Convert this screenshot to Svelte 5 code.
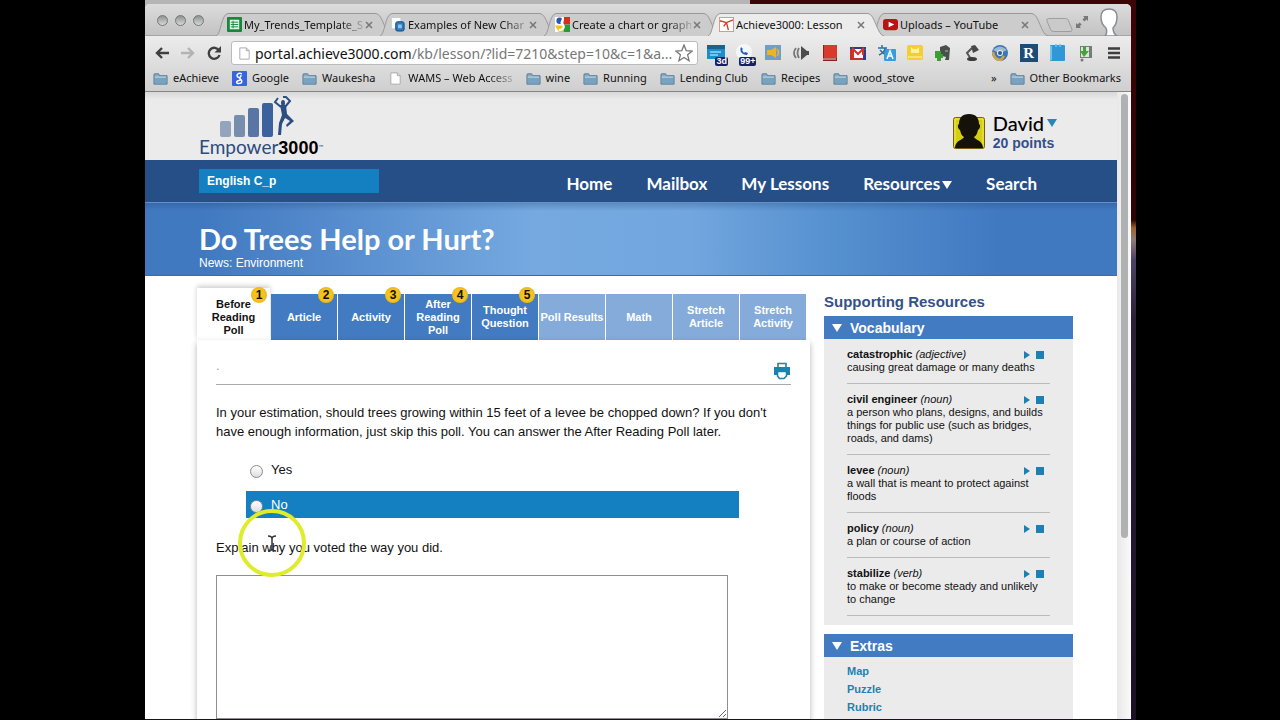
<script>

	let answer = '';
	let explanation = '';

	const tabs = [
		{ title: 'My_Trends_Template_S', icon: 'sheet', fade: true },
		{ title: 'Examples of New Char', icon: 'docs', fade: true },
		{ title: 'Create a chart or graph', icon: 'google', fade: true },
		{ title: 'Achieve3000: Lesson', icon: 'achieve', active: true },
		{ title: 'Uploads – YouTube', icon: 'youtube' }
	];

	const bookmarks = [
		{ label: 'eAchieve', icon: 'folder' },
		{ label: 'Google', icon: 'g' },
		{ label: 'Waukesha', icon: 'folder' },
		{ label: 'WAMS – Web Access', icon: 'page', fade: true },
		{ label: 'wine', icon: 'folder' },
		{ label: 'Running', icon: 'folder' },
		{ label: 'Lending Club', icon: 'folder' },
		{ label: 'Recipes', icon: 'folder' },
		{ label: 'wood_stove', icon: 'folder' }
	];

	const steps = [
		{ label: 'Before Reading Poll', num: 1, current: true },
		{ label: 'Article', num: 2 },
		{ label: 'Activity', num: 3 },
		{ label: 'After Reading Poll', num: 4 },
		{ label: 'Thought Question', num: 5 },
		{ label: 'Poll Results' },
		{ label: 'Math' },
		{ label: 'Stretch Article' },
		{ label: 'Stretch Activity' }
	];

	const words = [
		{ word: 'catastrophic', part: 'adjective', text: 'causing great damage or many deaths' },
		{ word: 'civil engineer', part: 'noun', text: 'a person who plans, designs, and builds things for public use (such as bridges, roads, and dams)' },
		{ word: 'levee', part: 'noun', text: 'a wall that is meant to protect against floods' },
		{ word: 'policy', part: 'noun', text: 'a plan or course of action' },
		{ word: 'stabilize', part: 'verb', text: 'to make or become steady and unlikely to change' }
	];

	const extras = ['Map', 'Puzzle', 'Rubric'];

</script>

{#snippet favicon(name)}
	<svg class="favicon" viewBox="0 0 16 16" aria-hidden="true">
		{#if name === 'sheet'}
			<rect width="16" height="16" rx="1" fill="#16883c" />
			<path d="M3 3h10v10H3z" fill="#e8f6ea" />
			<path d="M4 5.500h8M4 8h8M4 10.500h8M6.500 4v8" stroke="#16883c" fill="none" />
		{:else if name === 'docs'}
			<path d="M1 1h9v11H1z" fill="#fff" />
			<rect x="5" y="5" width="9" height="10" rx="2" fill="#2f79b8" stroke="#0d4e8b" />
			<path d="M7.500 8h4v4h-4z" fill="#8fc3ea" />
		{:else if name === 'google'}
			<rect width="16" height="16" fill="#fff" />
			<path d="M9 0h7v8H9z" fill="#d3301f" />
			<path d="M9 8h7v8H9z" fill="#259b3b" />
			<path d="M0 9h9v7H4z" fill="#f4c21c" />
			<circle cx="5" cy="4" r="3.500" fill="#2754b5" />
			<path d="M8 0c2 4-3 5 0 8s0 6-4 6" stroke="#fff" stroke-width="2.500" fill="none" />
		{:else if name === 'achieve'}
			<rect x=".5" y=".5" width="15" height="15" fill="#fff" stroke="#d99288" />
			<path d="M1 4l7 2 7-3M8 6l2 8M8 6l-3 4" stroke="#cc4030" stroke-width="1.500" fill="none" />
		{:else if name === 'youtube'}
			<rect y="2" width="16" height="12" rx="3" fill="#b91414" />
			<path d="M6 5l6 3-6 3z" fill="#fff" />
		{:else if name === 'folder'}
			<path d="M1 4q0-1 1-1h4l1 2h8v9H1z" fill="#88abc3" stroke="#557a94" />
			<path d="M2 7h12v6H2z" fill="#76a3c1" />
			<path d="M2 6.500h12" stroke="#c5dce9" />
		{:else if name === 'g'}
			<rect width="16" height="16" rx="1" fill="#3565df" />
			<path d="M10.500 3C7 1.500 4 4 6 6.200c2 1.600 4-.2 3.500-2M8 7c-.5 1.500 3 2 2.500 4.500C9.800 14 4.500 14 5 11.500 5.400 10 8 10 9 9.800" stroke="#fff" stroke-width="1.600" fill="none" />
		{:else}
			<path d="M3 2h7l3 3v9H3z" fill="#fff" stroke="#a9a9a9" />
			<path d="M10 2v3h3" fill="#ddd" stroke="#a9a9a9" />
		{/if}
	</svg>
{/snippet}

<div class="desktop">
	<div class="window">

		<div class="tab-strip">
			<div class="lights">
				<button aria-label="Close window"></button>
				<button aria-label="Minimize window"></button>
				<button aria-label="Zoom window"></button>
			</div>
			<div class="tabs">
				{#each tabs as tab}
					<div class="tab" class:active={tab.active}>
						<svg class="tab-shape" viewBox="0 0 176 23" preserveAspectRatio="none" aria-hidden="true">
							<path d="M0 23C5 22 5 1 12 .5H160C167 1 169 22 176 23" />
						</svg>
						{@render favicon(tab.icon)}
						<span class="tab-title" class:fade={tab.fade}>{tab.title}</span>
						<button class="tab-close" aria-label="Close tab">
							<svg viewBox="0 0 8 8"><path d="M1 1l6 6M7 1L1 7" /></svg>
						</button>
					</div>
				{/each}
			</div>
			<button class="new-tab" aria-label="New tab">
				<svg viewBox="0 0 30 15"><path d="M4 .5h18q2 0 3 2l4 10q0 2-2 2H9q-2 0-3-2L2 3Q1 1 4 .5z" fill="#cacaca" stroke="#999" /></svg>
			</button>
			<div class="strip-end">
				<svg width="14" height="14" viewBox="0 0 14 14" aria-hidden="true">
					<path d="M8 1h5v5l-1.600-1.600L9.500 6.500l-2-2 2-2zM6 13H1V8l1.600 1.600 2-2 2 2-2 2z" fill="#777" />
				</svg>
				<svg width="18" height="28" viewBox="0 0 18 28" aria-hidden="true">
					<path d="M5 28c2-2 2-5 1-8C2 17 1 13 1 9c0-5 3-8 8-8s8 3 8 8c0 4-1 8-4 11 0 3 1 6 4 8z" fill="#fff" stroke="#888f94" stroke-width="1.500" />
				</svg>
			</div>
		</div>

		<div class="toolbar">
			<div class="address-row">
				<div class="history">
					<button aria-label="Back">
						<svg viewBox="0 0 16 16"><path d="M15 8H3M8 3L3 8l5 5" stroke="#3f3f3f" stroke-width="2.400" fill="none" /></svg>
					</button>
					<button aria-label="Forward">
						<svg viewBox="0 0 16 16"><path d="M1 8h12M8 3l5 5-5 5" stroke="#b3b3b3" stroke-width="2.400" fill="none" /></svg>
					</button>
					<button aria-label="Reload">
						<svg viewBox="0 0 16 16"><path d="M13 5.500A5.500 5.500 0 1 0 13.500 10" stroke="#3f3f3f" stroke-width="2.400" fill="none" /><path d="M15 1v6.500H8.500z" fill="#3f3f3f" /></svg>
					</button>
				</div>
				<div class="address">
					{@render favicon('page')}
					<a class="url" href="#lesson">portal.achieve3000.com<span>/kb/lesson/?lid=7210&amp;step=10&amp;c=1&amp;a...</span></a>
					<button class="star" aria-label="Bookmark this page">
						<svg viewBox="0 0 18 18"><path d="M9 1l2.200 5.600 6 .4-4.600 3.800 1.500 5.900L9 13.500l-5.100 3.200 1.500-5.900L.8 7l6-.4z" fill="#fff" stroke="#777" stroke-width="1.300" /></svg>
					</button>
				</div>
				<div class="extensions">
					<button aria-label="Calendar">
						<svg viewBox="0 0 18 18"><path d="M0 1h18v14H0z" fill="#1d8dcb" /><path d="M0 1h18v4H0z" fill="#17658f" /><path d="M3 8h11M3 11h8" stroke="#73c8f0" stroke-width="2" /></svg>
						<span class="count">3d</span>
					</button>
					<button aria-label="Voice">
						<svg viewBox="0 0 18 18"><circle cx="9" cy="8" r="8" fill="#f4f7fa" /><path d="M6 3c-2 4 1 8 6 8l1-2-3-1-1 1-2-3 1-1z" fill="#245caf" /></svg>
						<span class="count">99+</span>
					</button>
					<button aria-label="Volume">
						<svg viewBox="0 0 18 18"><rect x="1" y="1" width="16" height="15" fill="#6f9fc9" /><path d="M3 6h4l5-3v11L7 11H3z" fill="#f0b030" /><path d="M13 5q3 4 0 7" stroke="#f0b030" stroke-width="1.500" fill="none" /></svg>
					</button>
					<button aria-label="Read aloud">
						<svg viewBox="0 0 18 18"><path d="M17 7h-2L9 2v14l6-5h2z" fill="#4c4c4c" /><path d="M7 4q-3 5 0 10M4 4q-4 5 0 10" stroke="#777" stroke-width="1.800" fill="none" /></svg>
					</button>
					<button aria-label="Dictionary">
						<svg viewBox="0 0 18 18"><path d="M2 1h14v16H2z" fill="#8e2019" /><path d="M3 1h13v13H3z" fill="#d83a2d" /><path d="M2 15h13" stroke="#e9d6d3" /></svg>
					</button>
					<button aria-label="Gmail">
						<svg viewBox="0 0 18 18"><path d="M1 3h16v13H1z" fill="#c92e2b" /><path d="M4 5h10v9H4z" fill="#fff" /><path d="M1 3h16v2H1zM14 6h3v10h-3z" fill="#263f87" /><path d="M4 14V5l5 5 5-5v6" stroke="#d9322e" stroke-width="2" fill="none" /></svg>
					</button>
					<button aria-label="Translate">
						<svg viewBox="0 0 18 18"><rect x="6" y="5" width="12" height="12" rx="1" fill="#3a9ddb" /><path d="M9 15l3-8 3 8M10 12h4" stroke="#fff" stroke-width="1.600" fill="none" /><path d="M0 4h9M4 1v3M1 11c4-2 6-4 6-7M2 6l4 4" stroke="#326f9c" stroke-width="1.500" fill="none" /></svg>
					</button>
					<button aria-label="Notes">
						<svg viewBox="0 0 18 18"><rect x="1" y="1" width="16" height="15" rx="2" fill="#f3cf36" /><path d="M5 3l2 2h4l2-2v6H5z" fill="#fff0a4" /><path d="M2 13h14" stroke="#f9e276" stroke-width="2" /></svg>
					</button>
					<button aria-label="Evernote">
						<svg viewBox="0 0 18 18"><path d="M6 3l6-2 4 3-1 12h-4l1-3-4-1-2-4z" fill="#47514a" /><path d="M1 7h6v3h2v4H7v3H3v-3H1z" fill="#3c9d32" /><path d="M11 7h3" stroke="#bbb" /></svg>
					</button>
					<button aria-label="Desk lamp">
						<svg viewBox="0 0 18 18"><path d="M8 15L4 9l5-5" stroke="#555" stroke-width="2" fill="none" /><path d="M8 2l4-1 4 5-6 3z" fill="#474747" /><ellipse cx="9" cy="15" rx="5" ry="2" fill="#3b3b3b" /></svg>
					</button>
					<button aria-label="Browser">
						<svg viewBox="0 0 18 18"><circle cx="9" cy="9" r="8" fill="#3d76b3" /><path d="M2 6q7-7 14 0l-4 2-6 0z" fill="#9dbbd0" /><path d="M2 8q1 8 8 8l3-4" stroke="#d2a248" stroke-width="2.500" fill="none" /><circle cx="9" cy="9" r="3" fill="#e9edf0" /><circle cx="9" cy="9" r="2" fill="#285d9d" /></svg>
					</button>
					<button class="letter" aria-label="R extension">R</button>
					<button aria-label="Notebook">
						<svg viewBox="0 0 18 18"><rect x="2" y="1" width="15" height="16" rx="1" fill="#3198d5" /><path d="M3 2v14" stroke="#70c3ef" stroke-width="2" /><path d="M8 0v3M12 0v3" stroke="#70c3ef" stroke-width="1.500" /></svg>
					</button>
					<button aria-label="Save page">
						<svg viewBox="0 0 18 18"><path d="M4 2h12v12H4z" fill="#747d78" /><path d="M5 3h8v10H5z" fill="#dce4dd" /><path d="M10 2v5h3l-5 6-4-6h3V2z" fill="#42a535" /><circle cx="6" cy="16" r="1.500" fill="#777" /></svg>
					</button>
					<button aria-label="Menu">
						<svg viewBox="0 0 18 18"><path d="M3 4.500h12M3 9h12M3 13.500h12" stroke="#3d3d3d" stroke-width="2.500" /></svg>
					</button>
				</div>
			</div>

			<nav class="bookmarks" aria-label="Bookmarks">
				{#each bookmarks as mark}
					<a href="#bookmark" class:fade={mark.fade}>{@render favicon(mark.icon)}{mark.label}</a>
				{/each}
				<span class="more">»</span>
				<a href="#bookmark">{@render favicon('folder')}Other Bookmarks</a>
			</nav>
		</div>

		<div class="viewport">
			<div class="page">

				<header class="masthead">
					<a class="logo" href="#home" aria-label="Empower3000 home">
						<svg width="76" height="42" viewBox="0 0 76 42" aria-hidden="true">
							<rect y="25" width="11" height="16" rx="2" fill="#93a4bc" />
							<rect x="14" y="19" width="11" height="22" rx="2" fill="#768dae" />
							<rect x="28" y="12" width="11" height="29" rx="2" fill="#5875a6" />
							<rect x="42" y="7" width="11" height="34" rx="2" fill="#3b629d" />
							<ellipse cx="63" cy="7" rx="2" ry="3" fill="#2c4f83" />
							<path d="M61 11l-6-5 3-4M65 11l5-6-4-4h-3" fill="none" stroke="#2c4f83" stroke-width="2" />
							<path d="M60 9h6l1 9 7 7-7 6-1-2 4-4-5-3-3 6-1 11h-3l1-12 3-8z" fill="#2c4f83" />
						</svg>
						<span class="wordmark">Empower<b>3000</b><small>™</small></span>
					</a>
					<div class="user">
						<svg width="32" height="36" viewBox="0 0 32 36" aria-hidden="true">
							<rect x=".5" y="3.500" width="31" height="31" rx="2" fill="#d6cd15" stroke="#7d5a1a" />
							<path d="M2 5h28v28H2z" fill="none" stroke="#f0ed45" />
							<path d="M16 0c-7 0-10 4-10 10-2 1-1 5 1 6 1 4 2 6 4 7-1 3-8 3-9 10v1h28v-1c-1-7-8-7-9-10 2-1 3-3 4-7 2-1 3-5 1-6C26 4 23 0 16 0z" fill="#141209" />
						</svg>
						<div>
							<button class="user-name">David<i class="caret"></i></button>
							<p class="points">20 points</p>
						</div>
					</div>
				</header>

				<nav class="main-nav" aria-label="Main">
					<button class="class-picker">English C_p</button>
					<div class="nav-links">
						<a href="#home">Home</a>
						<a href="#mailbox">Mailbox</a>
						<a href="#lessons">My Lessons</a>
						<a href="#resources">Resources<i class="caret"></i></a>
						<a href="#search">Search</a>
					</div>
				</nav>

				<div class="hero">
					<h1>Do Trees Help or Hurt?</h1>
					<p>News: Environment</p>
				</div>

				<div class="columns">
					<main>
						<div class="steps">
							{#each steps as step}
								<a href="#step" class:current={step.current} class:later={!step.num}>
									<span>{step.label}</span>
									{#if step.num}<b class="badge">{step.num}</b>{/if}
								</a>
							{/each}
						</div>

						<div class="panel">
							<div class="panel-top">
								<span>.</span>
								<button aria-label="Print">
									<svg viewBox="0 0 18 18">
										<path d="M5 5V1.500h8V5" fill="#fff" stroke="#1b83ad" stroke-width="1.600" />
										<path d="M1 5h16v8h-3v-3H4v3H1z" fill="#1b83ad" />
										<path d="M4.500 9.500h9V14L11 16.500H6.500L4.500 14z" fill="#fff" stroke="#1b83ad" stroke-width="1.600" />
									</svg>
								</button>
							</div>

							<p class="question">In your estimation, should trees growing within 15 feet of a levee be chopped down? If you don't have enough information, just skip this poll. You can answer the After Reading Poll later.</p>

							<div class="choices">
								<label><input type="radio" name="poll" value="yes" bind:group={answer} />Yes</label>
								<label class="hovered"><input type="radio" name="poll" value="no" bind:group={answer} />No</label>
							</div>

							<label class="explain" for="explanation">Explain why you voted the way you did.</label>
							<textarea id="explanation" bind:value={explanation}></textarea>

							<svg class="pointer" width="70" height="70" viewBox="0 0 70 70" aria-hidden="true">
								<circle cx="35" cy="35" r="32" fill="none" stroke="#dfec2b" stroke-width="4" />
								<path d="M31 28q4 0 4 3 0-3 4-3M35 31v10M31 43q4 0 4-3 0 3 4 3" fill="none" stroke="#333" stroke-width="1.500" />
							</svg>
						</div>
					</main>

					<aside>
						<h2>Supporting Resources</h2>
						<h3><i class="caret"></i>Vocabulary</h3>
						<div class="vocabulary">
							{#each words as item}
								<div class="word">
									<div class="word-head">
										<span><b>{item.word}</b> <em>({item.part})</em></span>
										<button aria-label="Play {item.word}"><svg viewBox="0 0 8 8"><path d="M2 0l6 4-6 4z" /></svg></button>
										<button aria-label="Stop {item.word}"><svg viewBox="0 0 8 8"><path d="M0 0h8v8H0z" /></svg></button>
									</div>
									<p>{item.text}</p>
								</div>
							{/each}
						</div>
						<h3><i class="caret"></i>Extras</h3>
						<div class="extras">
							{#each extras as extra}
								<a href="#extra">{extra}</a>
							{/each}
						</div>
					</aside>
				</div>

			</div>
			<div class="scrollbar"><div class="thumb"></div></div>
		</div>

	</div>
</div>


<style>

	:global(body) {
		background: #000;
	}

	.desktop {
		box-sizing: border-box;
		height: 100vh;
		margin: 0 144px 0 145px;
		padding: 4px 5px 1px 0;
		overflow: hidden;
		font-family: "Liberation Sans", Arial, sans-serif;
		font-size: 13px;
		color: #111;
		background:
			linear-gradient(90deg, #b5b5b5 61%, transparent 61%) top / 100% 8px no-repeat,
			linear-gradient(#3d0505 0, #2c0303 220px, #a0622a 228px, #8d7b78 240px, #4b4267 260px, #2b2038 320px, #1c1024 100%);
	}

	.desktop :is(h1, h2, h3, p) {
		margin: 0;
	}

	a {
		color: inherit;
		text-decoration: none;
	}

	button {
		display: block;
		padding: 0;
		border: 0;
		background: none;
		color: inherit;
		font: inherit;
	}

	svg {
		display: block;
	}

	.window {
		display: flex;
		flex-direction: column;
		height: 100%;
		overflow: hidden;
		border-radius: 5px 5px 0 0;
		background: #fff;
	}

	/* browser chrome */

	.tab-strip {
		display: flex;
		align-items: flex-end;
		flex: none;
		height: 32px;
		padding: 0 13px 0 12px;
		background: linear-gradient(#dcdcdc, #c2c2c2);
		font: 11px "Noto Sans", "Open Sans", sans-serif;
		box-shadow: inset 0 -1px #a5a5a5;
	}

	.lights {
		display: flex;
		flex: none;
		gap: 7px;
		align-self: center;
		width: 59px;
	}

	.lights button {
		width: 11px;
		height: 11px;
		border: 1px solid #727876;
		border-radius: 50%;
		background: linear-gradient(#8d9391, #d6d9d8);
	}

	.tabs {
		display: flex;
		flex: 0 1 820px;
		min-width: 0;
	}

	.tab {
		box-sizing: border-box;
		display: flex;
		align-items: center;
		gap: 2px;
		position: relative;
		flex: 0 1 176px;
		min-width: 0;
		height: 23px;
		padding: 0 19px 0 11px;
		margin-right: -12px;
	}

	.tab-shape {
		position: absolute;
		inset: 0;
		width: 100%;
		height: 100%;
		fill: #cccccc;
		stroke: #999;
	}

	.tab.active {
		z-index: 1;
	}

	.tab.active .tab-shape {
		fill: #ececec;
	}

	.favicon {
		position: relative;
		flex: none;
		width: 15px;
		height: 15px;
	}

	.tab-title {
		position: relative;
		flex: 1;
		overflow: hidden;
		white-space: nowrap;
	}

	.fade {
		mask-image: linear-gradient(90deg, #000 80%, rgba(0, 0, 0, .2));
	}

	.tab-close {
		position: relative;
		width: 8px;
	}

	.tab-close path {
		stroke: #777;
		stroke-width: 1.5;
	}

	.new-tab {
		flex: none;
		width: 28px;
		margin: 0 0 4px 9px;
	}

	.strip-end {
		display: flex;
		align-items: center;
		gap: 11px;
		margin-left: auto;
	}

	.toolbar {
		flex: none;
		background: linear-gradient(#ececec, #cfcfcf);
		border-bottom: 1px solid #858585;
	}

	.address-row {
		display: flex;
		align-items: center;
		height: 34px;
		padding: 0 8px 0 9px;
	}

	.history {
		display: flex;
		gap: 10px;
		width: 77px;
	}

	.history svg {
		width: 16px;
	}

	.address {
		box-sizing: border-box;
		display: flex;
		align-items: center;
		flex: 1;
		min-width: 0;
		height: 24px;
		padding: 0 4px 0 5px;
		border: 1px solid #bbb;
		border-radius: 3px;
		background: #fff;
	}

	.url {
		flex: 1;
		min-width: 0;
		margin-left: 3px;
		overflow: hidden;
		white-space: nowrap;
		font: 14px "Noto Sans", "Open Sans", sans-serif;
	}

	.url span {
		color: #777;
	}

	.star svg {
		width: 18px;
	}

	.extensions {
		display: flex;
		justify-content: space-between;
		width: 416px;
		margin-left: 9px;
	}

	.extensions button {
		position: relative;
		width: 18px;
		height: 18px;
	}

	.extensions .letter {
		background: #1d4d75;
		color: #fff;
		font: bold 15px/18px "Liberation Serif", serif;
	}

	.count {
		position: absolute;
		right: -3px;
		bottom: -4px;
		padding: 0 1px;
		border-radius: 2px;
		background: #14205f;
		color: #fff;
		font: bold 9px/9px "Liberation Sans", sans-serif;
	}

	.bookmarks {
		display: flex;
		align-items: center;
		gap: 13px;
		height: 16px;
		padding: 0 10px 5px 8px;
		font: 11px/16px "Noto Sans", "Open Sans", sans-serif;
		white-space: nowrap;
	}

	.bookmarks a {
		display: flex;
		align-items: center;
		gap: 5px;
	}

	.more {
		margin-left: auto;
	}

	.viewport {
		display: flex;
		flex: 1;
		min-height: 0;
	}

	.page {
		flex: 1;
		min-width: 0;
		overflow: hidden;
	}

	.scrollbar {
		box-sizing: border-box;
		width: 14px;
		padding: 2px 3px 0 4px;
		background: linear-gradient(90deg, #e8e8e8, #fafafa);
	}

	.thumb {
		height: 71%;
		border-radius: 4px;
		background: #b0b1b2;
	}

	/* site header */

	.caret {
		display: inline-block;
		border: 5px solid transparent;
		border-top: 8px solid;
		border-bottom: 0;
	}

	.masthead {
		display: flex;
		justify-content: space-between;
		align-items: center;
		height: 68px;
		padding: 0 60px 0 54px;
		background: linear-gradient(#d8d8d8, #ebebeb 8px);
	}

	.logo svg {
		margin-left: 21px;
	}

	.wordmark {
		display: block;
		font: 19px/18px Lato, sans-serif;
		color: #2c4c7d;
	}

	.wordmark b {
		font: bold 18px/18px "Liberation Sans", sans-serif;
		color: #000;
	}

	.wordmark small {
		font-size: 6px;
		vertical-align: top;
	}

	.user {
		display: flex;
		align-items: center;
		gap: 8px;
		margin-top: 11px;
	}

	.user-name {
		display: flex;
		align-items: center;
		gap: 3px;
		font: 500 20px/22px Lato, sans-serif;
		color: #000;
	}

	.user-name .caret {
		color: #2488b8;
	}

	.points {
		font-size: 14px;
		line-height: 18px;
		font-weight: bold;
		color: #34508a;
	}

	.main-nav {
		display: flex;
		justify-content: space-between;
		align-items: center;
		height: 42px;
		padding: 0 80px 0 54px;
		background: #264f87;
		color: #fff;
	}

	.class-picker {
		width: 180px;
		height: 24px;
		padding: 0 8px;
		background: #1580c1;
		font-size: 12px;
		font-weight: bold;
		text-align: left;
	}

	.nav-links {
		display: flex;
		gap: 34px;
		padding-top: 5px;
		font: bold 17px/22px Lato, sans-serif;
	}

	.nav-links .caret {
		margin-left: 2px;
		vertical-align: 1px;
		border-width: 8px 5px 0;
	}

	.hero {
		box-sizing: border-box;
		height: 74px;
		padding: 19px 54px 0;
		border-top: 1px solid #6590c5;
		border-bottom: 1px solid #3a6cab;
		background:
			linear-gradient(rgba(30, 70, 120, .3), transparent 8px),
			linear-gradient(90deg, #4179c1 6%, #75a9e0 40%, #72a6de 56%, #5590cf 71%, #4179c1 88%);
		color: #fff;
	}

	h1 {
		font: bold 29px/34px Lato, sans-serif;
	}

	.hero p {
		font-size: 12px;
		line-height: 14px;
	}

	/* lesson */

	.columns {
		display: flex;
		align-items: flex-start;
		gap: 14px;
		padding: 12px 44px 0 52px;
	}

	main {
		flex: 1;
		min-width: 0;
	}

	.steps {
		display: flex;
		align-items: flex-end;
		gap: 1px;
		padding-right: 4px;
		font-size: 11px;
		line-height: 13px;
		font-weight: bold;
		text-align: center;
	}

	.steps a {
		box-sizing: border-box;
		display: flex;
		align-items: center;
		justify-content: center;
		position: relative;
		flex: 1 1 0;
		height: 46px;
		background: #427bc2;
		color: #fff;
	}

	.steps .later {
		background: #84abda;
	}

	.steps .current {
		flex: 0 0 73px;
		height: 52px;
		padding: 6px 10px 0;
		background: #fff;
		color: #111;
		box-shadow: 0 -2px 5px rgba(0, 0, 0, .2);
	}

	.badge {
		position: absolute;
		top: -7px;
		right: 3px;
		width: 16px;
		height: 16px;
		border-radius: 50%;
		background: radial-gradient(#f5c31c 50%, #d9a813);
		color: #111;
		font-size: 12px;
		line-height: 16px;
	}

	.current .badge {
		top: -1px;
	}

	.panel {
		position: relative;
		padding: 0 19px 40px;
		background: #fff;
		box-shadow: 0 3px 6px rgba(0, 0, 0, .3);
	}

	.panel-top {
		display: flex;
		justify-content: space-between;
		align-items: center;
		height: 45px;
		padding-top: 18px;
		box-sizing: border-box;
		border-bottom: 1px solid #aaa;
		color: #999;
	}

	.panel-top span {
		align-self: flex-start;
	}

	.panel-top svg {
		width: 18px;
	}

	.question {
		padding-top: 18px;
		line-height: 19px;
	}

	.choices {
		display: flex;
		flex-direction: column;
		gap: 8px;
		margin: 15px 52px 20px 30px;
	}

	.choices label {
		display: flex;
		align-items: center;
		gap: 8px;
		height: 27px;
		padding-left: 4px;
	}

	.choices .hovered {
		background: #1580c1;
		color: #fff;
	}

	.choices input {
		appearance: none;
		width: 13px;
		height: 13px;
		margin: 3px 0 0;
		border: 1px solid #8b8b8b;
		border-radius: 50%;
		background: linear-gradient(#fff, #dedede);
	}

	.explain {
		display: block;
		margin-bottom: 18px;
		line-height: 19px;
	}

	textarea {
		box-sizing: border-box;
		display: block;
		width: 89%;
		height: 144px;
		border: 1px solid #8f8f8f;
		background: #fff;
	}

	.pointer {
		position: absolute;
		top: 168px;
		left: 40px;
	}

	/* sidebar */

	aside {
		width: 249px;
		font-size: 11px;
		line-height: 13px;
	}

	h2 {
		padding: 4px 0;
		font-size: 15px;
		line-height: 20px;
		color: #34508a;
	}

	h3 {
		display: flex;
		align-items: center;
		gap: 8px;
		height: 23px;
		padding-left: 8px;
		background: #427bc2;
		color: #fff;
		font-size: 14px;
		line-height: 24px;
	}

	.vocabulary {
		margin-bottom: 9px;
		padding: 0 23px 9px;
		background: #ebebeb;
	}

	.word {
		padding: 9px 0;
		border-bottom: 1px solid #bbb;
	}

	.word p {
		padding-right: 5px;
	}

	.word-head {
		display: flex;
		align-items: center;
		gap: 6px;
		padding-right: 6px;
	}

	.word-head span {
		flex: 1;
	}

	.word-head svg {
		width: 8px;
		fill: #1d80b3;
	}

	.extras {
		display: flex;
		flex-direction: column;
		padding: 5px 23px 20px;
		background: #ebebeb;
		color: #2281ae;
		font-weight: bold;
		line-height: 18px;
	}

</style>
